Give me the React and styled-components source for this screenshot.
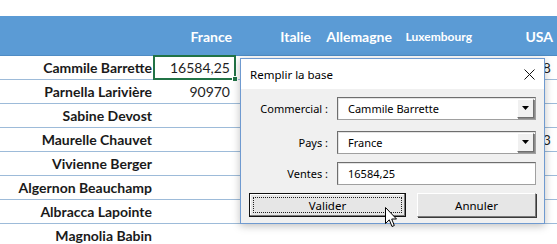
import React from 'react';
import styled, { createGlobalStyle } from 'styled-components';

const GlobalStyle = createGlobalStyle`
  html, body {
    margin: 0;
    padding: 0;
    background: #ffffff;
  }
  * {
    box-sizing: border-box;
  }
`;

const Screen = styled.div`
  position: relative;
  width: 557px;
  height: 244px;
  overflow: hidden;
  background: #ffffff;
  font-family: Lato, 'Liberation Sans', sans-serif;
`;

const Sheet = styled.div`
  padding-top: 16px;
`;

const cols = '153px 83px 79px 81px 80px 81px';

const HeaderRow = styled.div`
  display: grid;
  grid-template-columns: ${cols};
  height: 40px;
  background: #5b9bd5;
  border-bottom: 1px solid #4f8cc4;
`;

const HeadCell = styled.div`
  display: flex;
  align-items: center;
  justify-content: flex-end;
  padding-right: 4px;
  padding-top: 2px;
  color: #ffffff;
  font-weight: 700;
  font-size: ${p => (p.$small ? 12 : 14)}px;
  white-space: nowrap;
`;

const Row = styled.div`
  display: grid;
  grid-template-columns: ${cols};
  height: 24px;
  border-bottom: 1px solid #9dbbd9;
`;

const NameCell = styled.div`
  display: flex;
  align-items: center;
  justify-content: flex-end;
  padding-right: 1px;
  color: #1a1a1a;
  font-weight: 700;
  font-size: 14px;
  white-space: nowrap;
`;

const ValueCell = styled.div`
  position: relative;
  display: flex;
  align-items: center;
  justify-content: flex-end;
  padding-right: 4px;
  color: #1e1e1e;
  font-size: 14px;
  border: 2px solid ${p => (p.$selected ? '#217346' : 'transparent')};
  margin: -1px 0 -1px 0;
`;

const FillHandle = styled.span`
  position: absolute;
  right: -4px;
  bottom: -4px;
  width: 6px;
  height: 6px;
  background: #217346;
  border: 1px solid #ffffff;
`;

const Dialog = styled.div`
  position: absolute;
  left: 240px;
  top: 58px;
  width: 305px;
  height: 166px;
  border: 1px solid #6f9ad0;
  background: #f0f0f0;
  box-shadow: 0 2px 8px rgba(0, 0, 0, 0.25);
  font-family: 'Noto Sans', 'Open Sans', sans-serif;
  font-size: 11px;
  color: #000000;
  display: flex;
  flex-direction: column;
`;

const TitleBar = styled.div`
  height: 30px;
  background: #ffffff;
  display: flex;
  align-items: center;
  justify-content: space-between;
  padding: 0 9px 0 9px;
  font-size: 11.5px;
`;

const DialogBody = styled.div`
  padding: 0 8px 0 0;
`;

const FieldRow = styled.div`
  display: grid;
  grid-template-columns: 87px 1fr;
  column-gap: 9px;
  align-items: center;
  height: 23px;
  margin-top: ${p => p.$top}px;
`;

const Label = styled.div`
  text-align: right;
  white-space: nowrap;
`;

const Field = styled.div`
  height: 23px;
  background: #ffffff;
  border: 1px solid #a0a0a0;
  border-top-color: #6e6e6e;
  border-left-color: #6e6e6e;
  box-shadow: inset 1px 1px 0 #e3e3e3;
  display: flex;
  align-items: center;
  padding-left: 10px;
  white-space: nowrap;
`;

const FieldText = styled.span`
  flex: 1;
`;

const DropButton = styled.span`
  width: 17px;
  height: 19px;
  margin-right: 1px;
  background: #f0f0f0;
  border: 1px solid;
  border-color: #ffffff #6e6e6e #6e6e6e #ffffff;
  box-shadow: 1px 1px 0 #8a8a8a;
  display: flex;
  align-items: center;
  justify-content: center;
`;

const ButtonRow = styled.div`
  display: grid;
  grid-template-columns: 157px 119px;
  column-gap: 11px;
  margin: 8px 0 0 8px;
`;

const Button = styled.div`
  height: 24px;
  display: flex;
  align-items: center;
  justify-content: center;
  background: #e6e6e6;
  border: 1px solid;
  border-color: ${p => (p.$default ? '#101010' : '#ffffff #7a7a7a #7a7a7a #ffffff')};
  box-shadow: ${p =>
    p.$default
      ? 'inset -1px -1px 0 #7a7a7a, inset 1px 1px 0 #ffffff'
      : '1px 1px 0 #3a3a3a'};
  font-size: 11.5px;
  position: relative;
`;

const Focus = styled.span`
  position: absolute;
  inset: 3px;
  border: 1px dotted #202020;
`;

const Cursor = styled.svg`
  position: absolute;
  left: 385px;
  top: 207px;
`;

const names = [
  'Cammile Barrette',
  'Parnella Larivière',
  'Sabine Devost',
  'Maurelle Chauvet',
  'Vivienne Berger',
  'Algernon Beauchamp',
  'Albracca Lapointe',
  'Magnolia Babin',
];

const france = ['16584,25', '90970', '', '', '', '', '', ''];
const usa = ['45878', '', '', '12453', '', '', '', ''];

const Arrow = () => (
  <svg width="9" height="5" viewBox="0 0 9 5">
    <path d="M1 0 L8 0 L4.5 4 Z" fill="#000" />
  </svg>
);

export default function App() {
  return (
    <>
      <GlobalStyle />
      <Screen>
        <Sheet>
          <HeaderRow>
            <HeadCell />
            <HeadCell>France</HeadCell>
            <HeadCell>Italie</HeadCell>
            <HeadCell>Allemagne</HeadCell>
            <HeadCell $small>Luxembourg</HeadCell>
            <HeadCell>USA</HeadCell>
          </HeaderRow>
          {names.map((name, i) => (
            <Row key={name}>
              <NameCell>{name}</NameCell>
              <ValueCell $selected={i === 0}>
                {france[i]}
                {i === 0 && <FillHandle />}
              </ValueCell>
              <ValueCell />
              <ValueCell />
              <ValueCell />
              <ValueCell>{usa[i]}</ValueCell>
            </Row>
          ))}
        </Sheet>

        <Dialog>
          <TitleBar>
            <span>Remplir la base</span>
            <svg width="11" height="11" viewBox="0 0 11 11">
              <path d="M0.5 0.5 L10.5 10.5 M10.5 0.5 L0.5 10.5" stroke="#111" strokeWidth="1" />
            </svg>
          </TitleBar>
          <DialogBody>
            <FieldRow $top={8}>
              <Label>Commercial :</Label>
              <Field>
                <FieldText>Cammile Barrette</FieldText>
                <DropButton><Arrow /></DropButton>
              </Field>
            </FieldRow>
            <FieldRow $top={11}>
              <Label>Pays :</Label>
              <Field>
                <FieldText>France</FieldText>
                <DropButton><Arrow /></DropButton>
              </Field>
            </FieldRow>
            <FieldRow $top={8}>
              <Label>Ventes :</Label>
              <Field>
                <FieldText>16584,25</FieldText>
              </Field>
            </FieldRow>
          </DialogBody>
          <ButtonRow>
            <Button $default>
              <Focus />
              Valider
            </Button>
            <Button>Annuler</Button>
          </ButtonRow>
        </Dialog>

        <Cursor width="13" height="21" viewBox="0 0 13 21">
          <path
            d="M0.5 0.5 L0.5 16.5 L4.3 12.8 L7 19.5 L9.3 18.5 L6.7 12 L11.5 12 Z"
            fill="#ffffff"
            stroke="#000000"
            strokeWidth="1"
            strokeLinejoin="round"
          />
        </Cursor>
      </Screen>
    </>
  );
}
